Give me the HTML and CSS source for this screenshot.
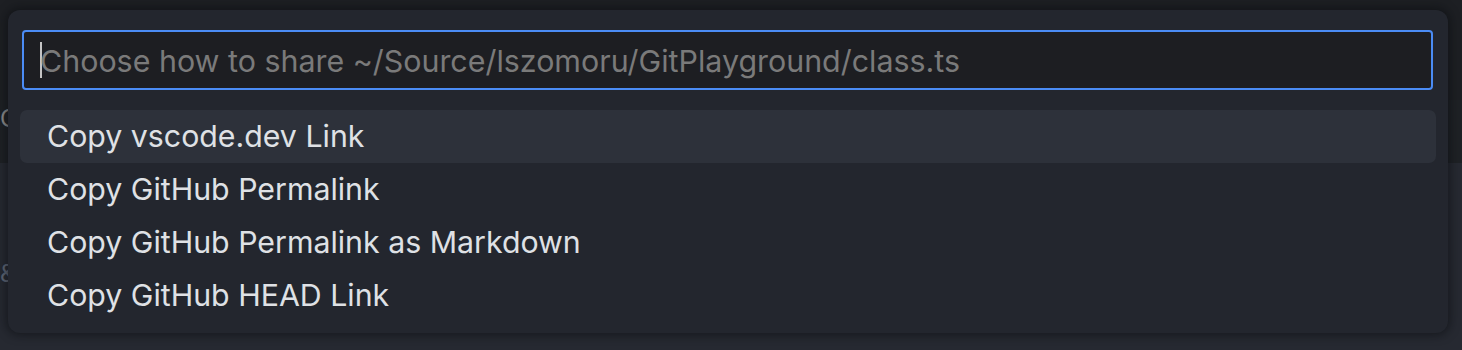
FILE: index.html
```html
<!DOCTYPE html>
<html>
<head>
<meta charset="utf-8">
<link rel="stylesheet" href="styles.css">
</head>
<body>
<div class="editor">
  <div class="editor-top"></div>
  <div class="editor-band"><span class="peek peek-g">G</span></div>
  <div class="editor-rest">
    <span class="peek peek-amp">&amp;</span>
  </div>
</div>
<div class="quickpick">
  <div class="input">
    <span class="caret"></span>
    <span class="placeholder">Choose how to share ~/Source/lszomoru/GitPlayground/class.ts</span>
  </div>
  <ul class="list">
    <li class="item active">Copy vscode.dev Link</li>
    <li class="item">Copy GitHub Permalink</li>
    <li class="item">Copy GitHub Permalink as Markdown</li>
    <li class="item">Copy GitHub HEAD Link</li>
  </ul>
</div>
</body>
</html>
```
FILE: styles.css
```css
html, body {
  margin: 0;
  padding: 0;
  width: 1462px;
  height: 350px;
  overflow: hidden;
  background: #262931;
  font-family: Inter, "Noto Sans", "Liberation Sans", sans-serif;
}
.editor {
  display: flex;
  flex-direction: column;
  height: 350px;
}
.editor-top {
  height: 100px;
  background: #1d1f23;
}
.editor-band {
  height: 63px;
  background: #1e2125;
  display: flex;
  align-items: center;
}
.editor-rest {
  flex: 1;
  background: #262931;
  padding-top: 96px;
}
.peek {
  display: block;
  margin-left: 0;
  font-size: 24px;
  line-height: 30px;
}
.peek-g {
  color: #8c8c8c;
  margin-top: -26px;
}
.peek-amp {
  color: #5e6675;
}
.quickpick {
  position: absolute;
  left: 8px;
  top: 10px;
  width: 1440px;
  height: 323px;
  box-sizing: border-box;
  background: #23262e;
  border-radius: 12px;
  box-shadow: 0 0 10px 2px rgba(10, 11, 14, 0.55);
  padding: 20px 12px 0 12px;
}
.input {
  margin: 0 3px 0 2px;
  height: 60px;
  box-sizing: border-box;
  border: 2px solid #4b8cf5;
  border-radius: 4px;
  background: #1d1e22;
  display: flex;
  align-items: center;
  padding-left: 16px;
}
.caret {
  width: 2px;
  height: 36px;
  background: #c4c4c4;
  margin-right: -2px;
  flex: none;
}
.placeholder {
  color: #7a7a7a;
  font-size: 30.4px;
  white-space: nowrap;
  margin-top: 2px;
}
.list {
  list-style: none;
  margin: 20px 0 0 0;
  padding: 0;
}
.item {
  height: 53px;
  line-height: 53px;
  padding-left: 27px;
  border-radius: 7px;
  color: #dfe1e5;
  font-size: 30.3px;
  white-space: nowrap;
}
.item.active {
  background: #2d313a;
}
```
